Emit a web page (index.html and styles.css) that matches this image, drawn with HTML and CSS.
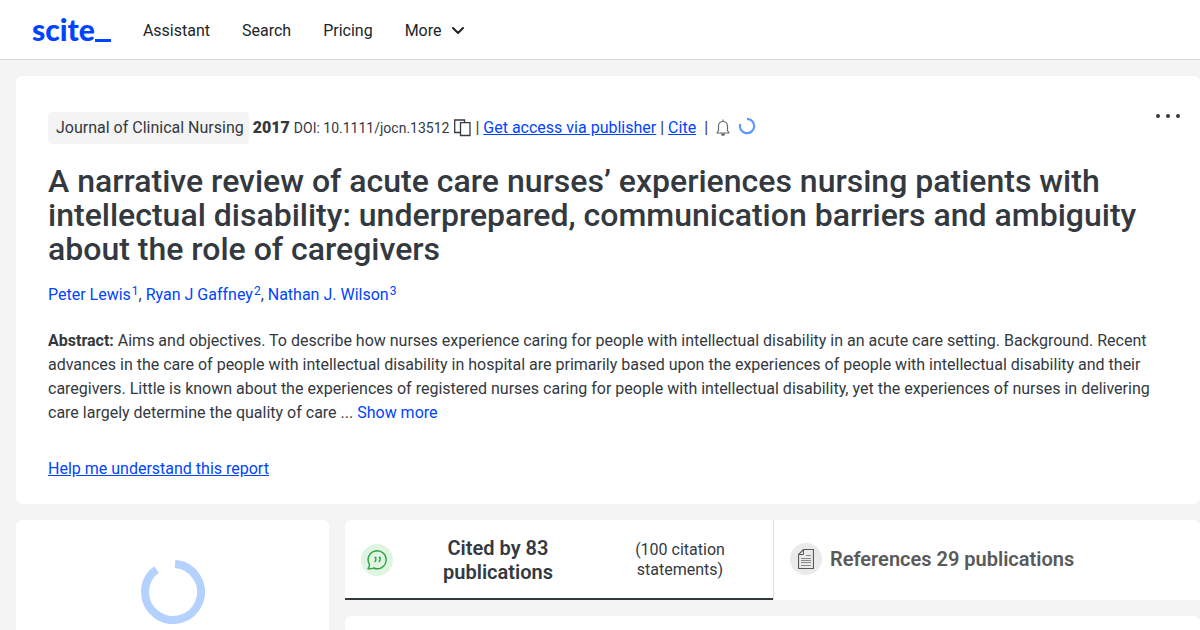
FILE: index.html
```
<!DOCTYPE html>
<html lang="en">
<head>
<meta charset="utf-8">
<meta name="viewport" content="width=device-width, initial-scale=1">
<title>A narrative review of acute care nurses’ experiences - scite</title>
<link rel="stylesheet" href="styles.css">
</head>
<body>
<header class="navbar">
  <a class="logo" href="#">scite<span class="logo-bar"></span></a>
  <nav class="nav">
    <a href="#">Assistant</a>
    <a href="#">Search</a>
    <a href="#">Pricing</a>
    <button class="more" type="button">More
      <svg width="12" height="8" viewBox="0 0 12 8" fill="none" stroke="#212529" stroke-width="2" stroke-linecap="round" stroke-linejoin="round" aria-hidden="true"><path d="M1 1l5 5 5-5"/></svg>
    </button>
  </nav>
</header>
<main class="page">
  <section class="card report">
    <div class="meta-row">
      <div class="meta">
        <span class="journal">Journal of Clinical Nursing</span>
        <strong class="year">2017</strong>
        <span class="doi">DOI: 10.1111/jocn.13512</span>
        <button class="icon-button" type="button" aria-label="Copy DOI">
          <svg width="17" height="18" viewBox="0 0 17 18" fill="none" stroke="#33393f" stroke-width="1.3" aria-hidden="true"><path d="M6 13.500H.700V1h9.800v2.500"/><path d="M6.500 3.700h9.500v12.800h-9.500z"/></svg>
        </button>
        <span class="bar">|</span>
        <a class="publisher" href="#">Get access via publisher</a>
        <span class="bar">|</span>
        <a href="#">Cite</a>
        <span class="bar bar-last">|</span>
        <button class="icon-button bell" type="button" aria-label="Set up alert">
          <svg width="14" height="18" viewBox="0 0 14 18" fill="none" stroke="#656a6f" stroke-width="1.2" stroke-linejoin="round" aria-hidden="true"><path d="M7 .5v2M1 14h12L11.500 11.500V7c0-3-2-4.500-4.500-4.500S2.500 4 2.500 7v4.500z"/><path d="M5.500 14.500a1.500 1.800 0 0 0 3 0" fill="#656a6f"/></svg>
        </button>
        <svg class="mini-spinner" width="18" height="18" viewBox="0 0 18 18" fill="none" stroke="#5c96ff" stroke-width="2.200" aria-hidden="true"><path d="M9 1.800A7.200 7.200 0 1 1 2.100 7" /></svg>
      </div>
      <button class="icon-button dots" type="button" aria-label="More options">
        <svg width="24" height="4" viewBox="0 0 24 4" fill="#33393f" aria-hidden="true"><circle cx="2" cy="2" r="2"/><circle cx="12" cy="2" r="2"/><circle cx="22" cy="2" r="2"/></svg>
      </button>
    </div>
    <h1 class="title">A narrative review of acute care nurses’ experiences nursing patients with intellectual disability: underprepared, communication barriers and ambiguity about the role of caregivers</h1>
    <p class="authors"><a href="#">Peter Lewis<sup>1</sup></a>, <a href="#">Ryan J Gaffney<sup>2</sup></a>, <a href="#">Nathan J. Wilson<sup>3</sup></a></p>
    <p class="abstract"><strong>Abstract:</strong> Aims and objectives. To describe how nurses experience caring for people with intellectual disability in an acute care setting. Background. Recent advances in the care of people with intellectual disability in hospital are primarily based upon the experiences of people with intellectual disability and their caregivers. Little is known about the experiences of registered nurses caring for people with intellectual disability, yet the experiences of nurses in delivering care largely determine the quality of care ... <button class="show-more" type="button">Show more</button></p>
    <a class="help" href="#">Help me understand this report</a>
  </section>
  <div class="columns">
    <aside class="card side">
      <svg width="64" height="64" viewBox="0 0 64 64" fill="none" stroke="#b5d1ff" stroke-width="8" role="img" aria-label="Loading"><path d="M34 4.070A28 28 0 1 1 15.500 9.400"/></svg>
    </aside>
    <div class="content">
      <div class="tabs">
        <button class="tab active" type="button">
          <span class="badge green">
            <svg width="20" height="20" viewBox="0 0 20 20" fill="none" stroke="#2fa044" stroke-width="1.400" stroke-linejoin="round" aria-hidden="true"><path d="M1 18.800c1.300-1.500 1.700-3 1.300-4.600A9 9 0 1 1 6.500 18c-1.500.800-3.300 1-5.500.800z"/><path d="M7.500 7.500h1.300v2.300c0 1-.400 1.700-1.300 2M11.800 7.500h1.300v2.300c0 1-.400 1.700-1.300 2"/></svg>
          </span>
          <span class="tab-title">Cited by 83 publications</span>
          <span class="tab-note">(100 citation statements)</span>
        </button>
        <button class="tab references" type="button">
          <span class="badge grey">
            <svg width="16" height="20" viewBox="0 0 16 20" fill="none" stroke="#5a5a5a" aria-hidden="true"><path d="M5.500.500h10v19H.500v-14z" stroke-width="1.200"/><path d="M5.500.500v5h-5" /><path d="M8 6.500h5M3 9.500h10M3 11.500h10M3 13.500h10M3 16.500h10" stroke="#8a8a8a"/></svg>
          </span>
          <span class="tab-title">References 29 publications</span>
        </button>
      </div>
      <div class="card results"></div>
    </div>
  </div>
</main>
</body>
</html>
```
FILE: styles.css
```
* { box-sizing: border-box; }
body {
  display: flex;
  flex-direction: column;
  min-height: 100vh;
  margin: 0;
  background: #f4f4f4;
  color: #33393f;
  font-family: Roboto, "Liberation Sans", sans-serif;
  font-size: 16px;
  line-height: 24px;
}
a { color: #0044ff; }
button {
  padding: 0;
  border: 0;
  background: none;
  color: inherit;
  font: inherit;
  cursor: pointer;
}
.navbar {
  display: flex;
  align-items: center;
  gap: 32px;
  height: 60px;
  padding: 0 32px;
  background: #fff;
  border-bottom: 1px solid #d9d9d9;
}
.logo {
  display: flex;
  align-items: flex-end;
  padding-bottom: 2px;
  color: #0044ff;
  font-family: Lato, sans-serif;
  font-size: 30px;
  font-weight: 900;
  line-height: 26px;
  text-decoration: none;
}
.logo-bar {
  width: 16px;
  height: 3px;
  background: #0044ff;
}
.nav {
  display: flex;
  align-items: center;
  gap: 32px;
  padding-top: 2px;
}
.nav a, .more {
  color: #212529;
  text-decoration: none;
}
.more {
  display: flex;
  align-items: center;
  gap: 10px;
}
.page {
  display: flex;
  flex: 1;
  flex-direction: column;
  padding: 16px 0 0 16px;
}
.card {
  background: #fff;
  border-radius: 6px;
}
.report { padding: 36px 32px 23px; }
.meta-row {
  display: flex;
  justify-content: space-between;
  padding-right: 4px;
  margin-right: -16px;
}
.meta {
  display: flex;
  align-items: center;
  gap: 4px;
}
.journal {
  padding: 4px 5px 4px 8px;
  background: #f4f4f4;
  border-radius: 4px;
}
.icon-button { display: flex; }
.doi {
  margin-right: 1px;
  font-size: 14px;
}
.year { font-weight: 900; }
.bar-last { margin-left: 4px; }
.bell { margin-left: 4px; }
.mini-spinner {
  margin: 0 0 4px 4px;
}
.dots {
  align-self: flex-start;
  padding: 2px 0;
}
.title {
  margin: 20px 0 17px;
  font-size: 32px;
  font-weight: 500;
  line-height: 34px;
}
.authors { margin: 0 0 22px; }
.authors a {
  text-decoration: none;
}
sup {
  position: relative;
  top: -5px;
  margin-left: 1px;
  font-size: 12px;
  line-height: 0;
  vertical-align: baseline;
}
.abstract { margin: 0 0 32px; }
.show-more { color: #0044ff; }
.columns {
  display: grid;
  flex: 1;
  grid-template-columns: 313px 1fr;
  gap: 16px;
  margin-top: 16px;
}
.side {
  display: flex;
  align-items: flex-start;
  justify-content: center;
  padding: 40px 0 0;
  border-radius: 6px 6px 0 0;
}
.content {
  display: flex;
  flex-direction: column;
}
.tabs {
  display: grid;
  grid-template-columns: 428px 1fr;
  background: #fff;
  border-radius: 6px 6px 0 0;
}
.tab {
  display: flex;
  align-items: center;
  gap: 8px;
  min-height: 80px;
  padding: 0 16px;
  color: #5a5a5a;
}
.tab.active {
  color: #33393f;
  box-shadow: inset 0 -2px #33393f;
}
.references {
  padding-bottom: 2px;
  border-left: 1px solid #dedede;
}
.tab-title {
  font-size: 20px;
  font-weight: 600;
}
.active .tab-title {
  width: 194px;
  padding: 0 32px;
}
.active .tab-note {
  flex: 1;
  padding: 0 32px;
  line-height: 20px;
}
.badge {
  display: flex;
  flex: none;
  align-items: center;
  justify-content: center;
  width: 32px;
  height: 32px;
  border-radius: 50%;
}
.green { background: #dff5e1; }
.grey { background: #eaeaea; }
.results {
  flex: 1;
  margin-top: 16px;
  border-radius: 6px 6px 0 0;
}
```
